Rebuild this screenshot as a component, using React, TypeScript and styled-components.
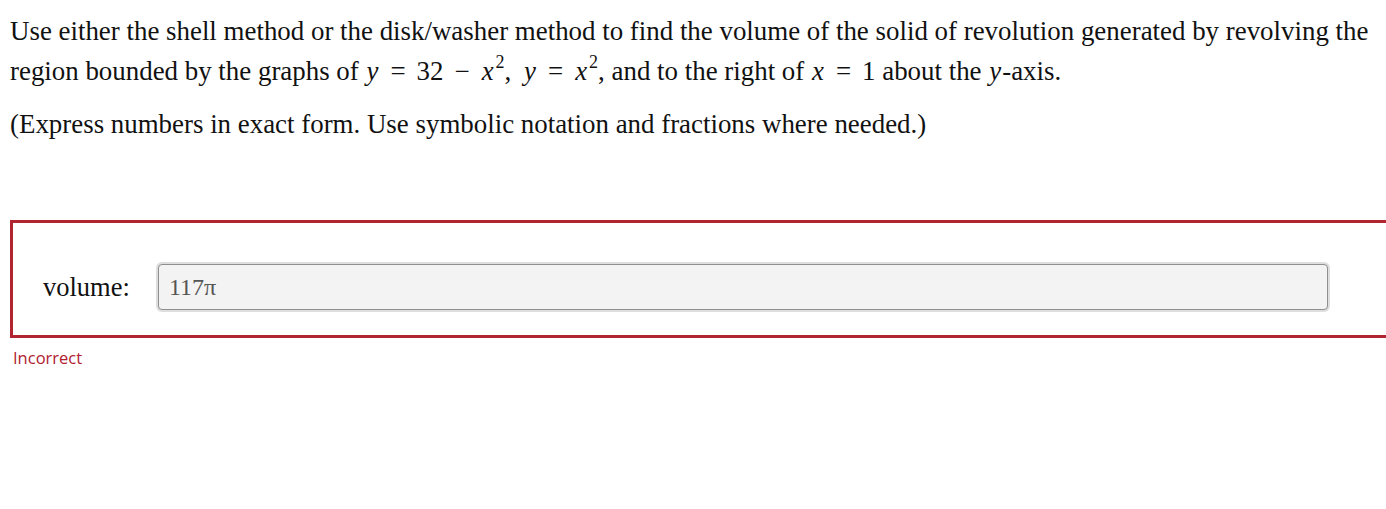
import React from 'react'
import styled, { createGlobalStyle } from 'styled-components'

const LookAndFeel = createGlobalStyle`
  html, body {
    margin: 0;
    padding: 0;
    background: #ffffff;
    overflow-x: hidden;
  }
`

const Page = styled.div`
  padding: 11px 0 0 10px;
  font-family: "Liberation Serif", "Times New Roman", serif;
  color: #111;
`

const Prompt = styled.p`
  margin: 0;
  font-size: 26.9px;
  line-height: 40px;
  white-space: nowrap;
`

const Note = styled.p`
  margin: 13px 0 0 0;
  font-size: 26.9px;
  line-height: 40px;
`

const V = styled.i`
  font-style: italic;
  margin: 0 1px;
`

const Op = styled.span`
  margin: 0 11px;
`

const Sep = styled.span`
  margin-right: 5px;
`

const Sup = styled.sup`
  font-size: 18px;
  line-height: 0;
  vertical-align: 12px;
  margin-left: 1px;
`

const AnswerBox = styled.div`
  margin-top: 76px;
  width: calc(100% + 40px);
  box-sizing: border-box;
  border: 3px solid #b0252f;
  padding: 41px 30px 25px 30px;
  display: flex;
  align-items: center;
`

const Label = styled.label`
  font-size: 26.5px;
  width: 115px;
  flex-shrink: 0;
`

const Field = styled.div`
  width: 1170px;
  height: 46px;
  box-sizing: border-box;
  background: #f3f3f3;
  border: 1px solid #8f8f8f;
  border-radius: 4px;
  box-shadow: 0 0 0 2px #dedede;
  display: flex;
  align-items: center;
  padding-left: 10px;
  font-size: 24px;
  color: #555;
`

const Feedback = styled.div`
  margin: 8px 0 0 3px;
  font-family: "Open Sans", "Noto Sans", sans-serif;
  font-size: 16.5px;
  color: #b0202f;
`

const App = () => {
  return (
    <Page>
      <LookAndFeel />
      <Prompt>
        Use either the shell method or the disk/washer method to find the volume of the solid of revolution generated by revolving the
        <br />
        region bounded by the graphs of <V>y</V><Op>=</Op>32<Op>−</Op><V>x</V><Sup>2</Sup><Sep>,</Sep> <V>y</V><Op>=</Op><V>x</V><Sup>2</Sup>, and to the right of <V>x</V><Op>=</Op>1 about the <V>y</V>-axis.
      </Prompt>
      <Note>(Express numbers in exact form. Use symbolic notation and fractions where needed.)</Note>
      <AnswerBox>
        <Label>volume:</Label>
        <Field>117π</Field>
      </AnswerBox>
      <Feedback>Incorrect</Feedback>
    </Page>
  )
}

export default App
